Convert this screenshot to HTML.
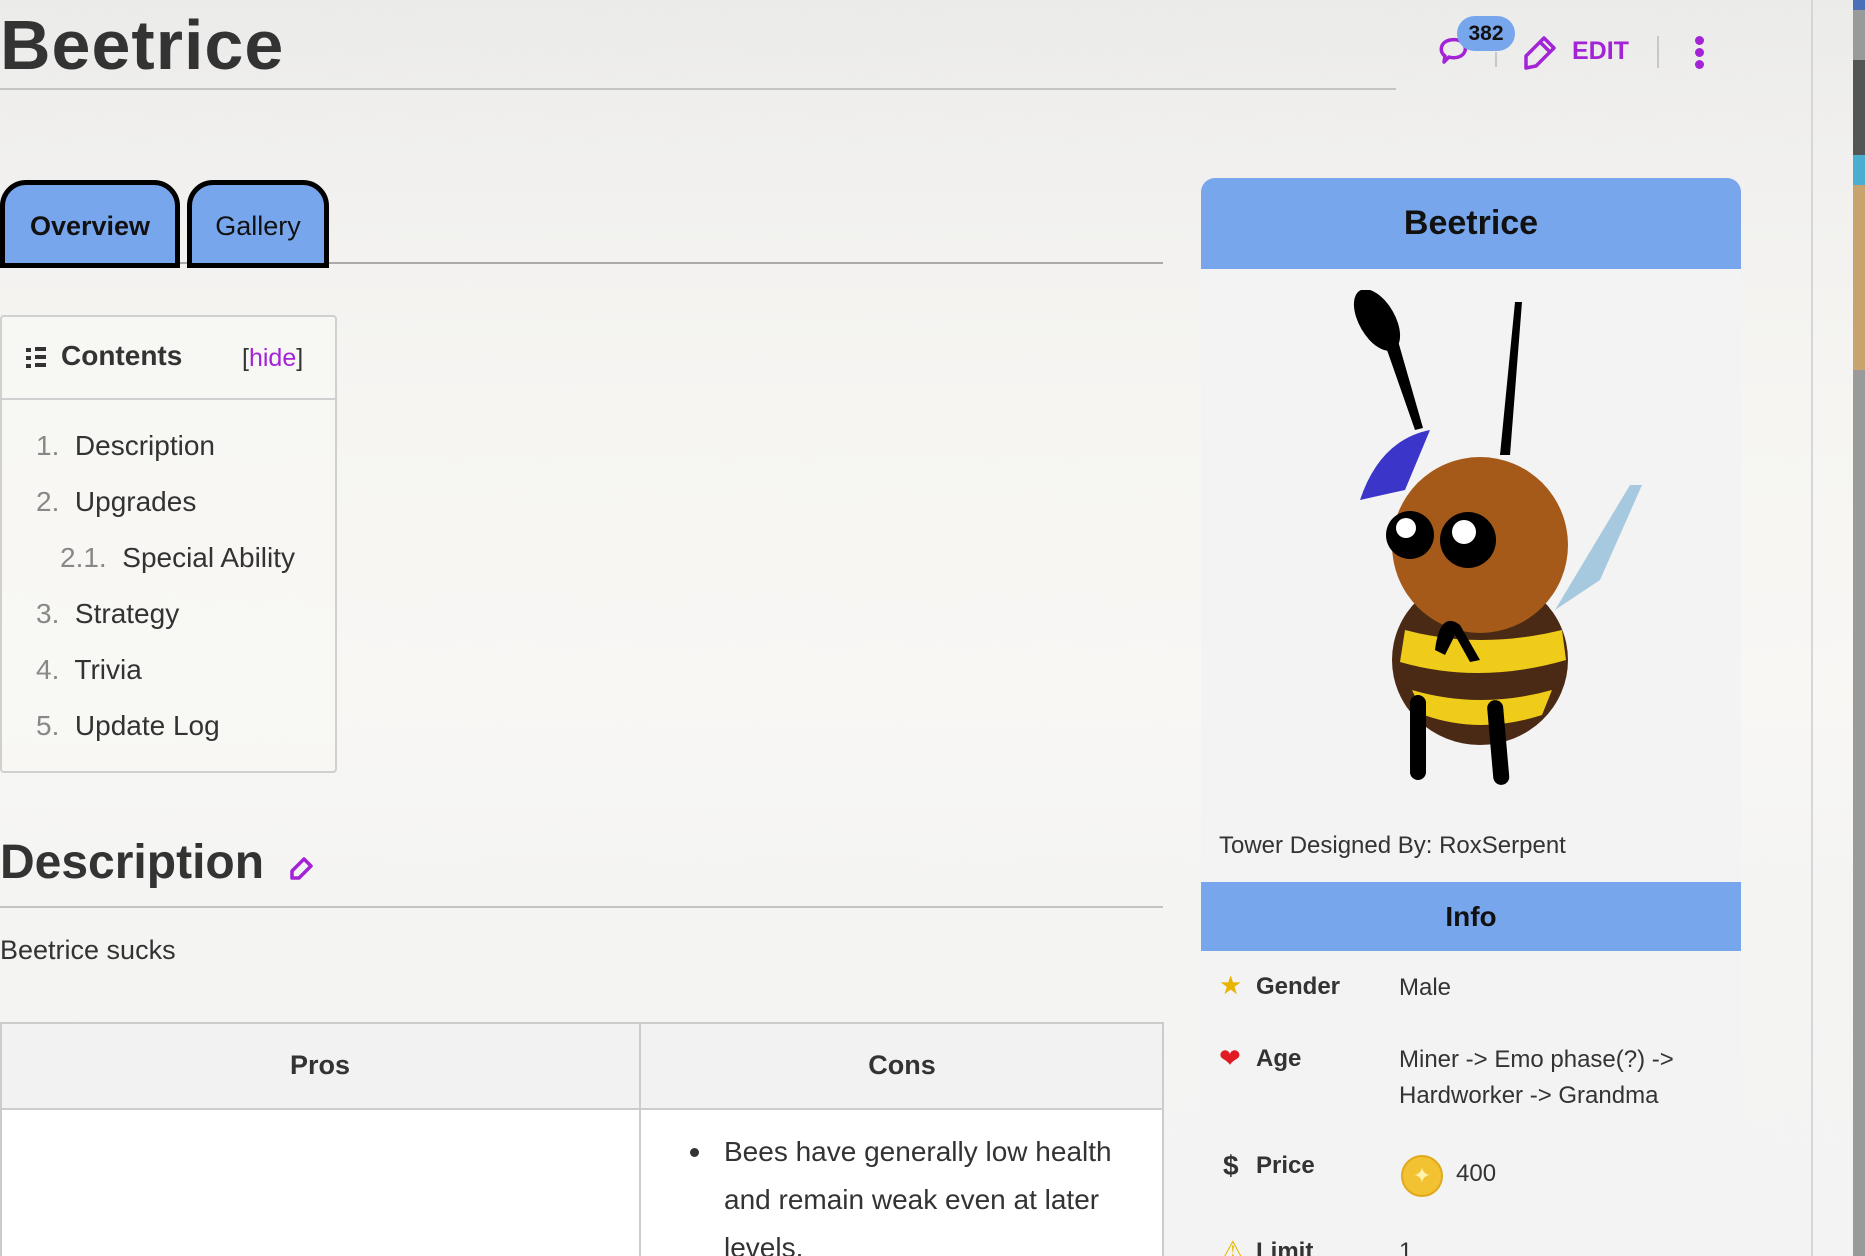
<!DOCTYPE html>
<html style="width:1865px;height:1256px;overflow:hidden"><head><meta charset="utf-8"><style>
*{margin:0;padding:0;box-sizing:border-box}
body{width:1865px;height:1256px;overflow:hidden;position:relative;font-family:"Liberation Sans",sans-serif;color:#2f2f2f;background:linear-gradient(180deg,#ebebea 0px,#f1f0ee 160px,#f6f5f2 400px,#f8f7f4 700px,#f4f4f3 900px,#f3f3f3 1256px)}
.a{position:absolute}
</style></head><body>
<div class="a" style="left:1811px;top:0;width:2px;height:1256px;background:#d6d6da"></div>
<div class="a" style="left:1853px;top:0;width:12px;height:10px;background:#4a70b8"></div>
<div class="a" style="left:1853px;top:10px;width:12px;height:50px;background:#9a9a9a"></div>
<div class="a" style="left:1853px;top:60px;width:12px;height:95px;background:#555"></div>
<div class="a" style="left:1853px;top:155px;width:12px;height:30px;background:#4aaed0"></div>
<div class="a" style="left:1853px;top:185px;width:12px;height:185px;background:#c9a36e"></div>
<div class="a" style="left:1853px;top:370px;width:12px;height:886px;background:#9a9a9a"></div>

<div class="a" style="left:0;top:2px;font-size:70px;font-weight:bold;color:#333;letter-spacing:1px;line-height:86px">Beetrice</div>
<div class="a" style="left:0;top:88px;width:1396px;height:2px;background:#c4c4c4"></div>

<svg class="a" style="left:1436px;top:34px" width="36" height="36" viewBox="0 0 36 36"><path d="M8 28 L9 22 C3 18 4 8 14 6 C24 4 31 10 29 17 C27 23 19 25 13 23 Z" fill="none" stroke="#a323d6" stroke-width="3.5" stroke-linejoin="round"/></svg>
<div class="a" style="left:1457px;top:16px;width:58px;height:35px;border-radius:18px;background:#78a6ec;font-weight:bold;font-size:21px;color:#111;text-align:center;line-height:35px">382</div>
<div class="a" style="left:1495px;top:52px;width:2px;height:15px;background:#c8c8c8"></div>
<svg class="a" style="left:1522px;top:32px" width="40" height="40" viewBox="0 0 40 40"><path d="M4 36 L4 24 L22 6 L32 16 L14 34 Z M18 10 L28 20" fill="none" stroke="#a323d6" stroke-width="3.5" stroke-linejoin="round"/></svg>
<div class="a" style="left:1572px;top:37px;font-size:25px;font-weight:bold;color:#a323d6">EDIT</div>
<div class="a" style="left:1657px;top:36px;width:2px;height:32px;background:#c8c8c8"></div>
<div class="a" style="left:1695px;top:36px;width:9px;height:9px;border-radius:50%;background:#a323d6"></div>
<div class="a" style="left:1695px;top:48px;width:9px;height:9px;border-radius:50%;background:#a323d6"></div>
<div class="a" style="left:1695px;top:60px;width:9px;height:9px;border-radius:50%;background:#a323d6"></div>

<div class="a" style="left:0;top:262px;width:1163px;height:2px;background:#aaa"></div>
<div class="a" style="left:0;top:180px;width:180px;height:88px;background:#78a6ec;border:5px solid #000;border-radius:26px 26px 0 0;font-weight:bold;font-size:27px;color:#111;text-align:center;line-height:82px">Overview</div>
<div class="a" style="left:187px;top:180px;width:142px;height:88px;background:#78a6ec;border:5px solid #000;border-radius:26px 26px 0 0;font-size:27px;color:#111;text-align:center;line-height:82px">Gallery</div>

<div class="a" style="left:0;top:315px;width:337px;height:458px;border:2px solid #d0d0d0;border-radius:4px;background:rgba(248,247,244,.8)"></div>
<div class="a" style="left:0;top:398px;width:337px;height:2px;background:#d0d0d0"></div>
<div class="a" style="left:26px;top:348px;width:5px;height:4px;background:#333;box-shadow:0 8px #333,0 16px #333"></div>
<div class="a" style="left:35px;top:347px;width:11px;height:4px;background:#333;box-shadow:0 8px #333,0 16px #333"></div>
<div class="a" style="left:61px;top:340px;font-size:28px;font-weight:bold;color:#333">Contents</div>
<div class="a" style="left:242px;top:344px;font-size:25px;color:#333">[<span style="color:#a323d6">hide</span>]</div>
<div class="a" style="left:36px;top:418px;font-size:28px;line-height:56px;color:#333">
<div><span style="color:#888">1.</span>&nbsp; Description</div>
<div><span style="color:#888">2.</span>&nbsp; Upgrades</div>
<div style="padding-left:24px"><span style="color:#888">2.1.</span>&nbsp; Special Ability</div>
<div><span style="color:#888">3.</span>&nbsp; Strategy</div>
<div><span style="color:#888">4.</span>&nbsp; Trivia</div>
<div><span style="color:#888">5.</span>&nbsp; Update Log</div>
</div>

<div class="a" style="left:0;top:835px;font-size:48px;font-weight:bold;color:#333">Description</div>
<svg class="a" style="left:289px;top:855px" width="26" height="26" viewBox="0 0 26 26"><path d="M3 23 L3 16 L15 4 L22 11 L10 23 Z" fill="none" stroke="#a323d6" stroke-width="3.5" stroke-linejoin="round"/></svg>
<div class="a" style="left:0;top:906px;width:1163px;height:2px;background:#c4c4c4"></div>
<div class="a" style="left:0;top:935px;font-size:27px;color:#333">Beetrice sucks</div>

<div class="a" style="left:0;top:1022px;width:1164px;height:260px;border:2px solid #ccc;background:#fff"></div>
<div class="a" style="left:0;top:1022px;width:1164px;height:88px;border:2px solid #ccc;background:#f2f2f2"></div>
<div class="a" style="left:639px;top:1022px;width:2px;height:260px;background:#ccc"></div>
<div class="a" style="left:0;top:1050px;width:640px;text-align:center;font-size:27px;font-weight:bold;color:#333">Pros</div>
<div class="a" style="left:640px;top:1050px;width:524px;text-align:center;font-size:27px;font-weight:bold;color:#333">Cons</div>
<div class="a" style="left:690px;top:1148px;width:9px;height:9px;border-radius:50%;background:#333"></div>
<div class="a" style="left:724px;top:1128px;width:400px;font-size:28px;line-height:48px;color:#333">Bees have generally low health and remain weak even at later levels.</div>

<div class="a" style="left:1201px;top:178px;width:540px;height:1100px;background:#f3f3f3;border-radius:14px 14px 0 0;overflow:hidden">
<div style="height:91px;background:#78a6ec;text-align:center;font-size:34px;font-weight:bold;color:#111;line-height:91px">Beetrice</div>
</div>
<svg class="a" style="left:1330px;top:290px" width="330" height="510" viewBox="0 0 330 510">
<path d="M300 195 L312 195 L270 290 L225 320 Z" fill="#9ec4de" opacity=".9"/>
<ellipse cx="47" cy="30" rx="18" ry="34" transform="rotate(-30 47 30)" fill="#000"/>
<path d="M50 40 L85 140 L93 138 L62 30 Z" fill="#000"/>
<path d="M185 12 L192 12 L180 165 L170 165 Z" fill="#000"/>
<ellipse cx="150" cy="370" rx="88" ry="85" fill="#4a2a14"/>
<path d="M75 340 Q150 360 232 340 L236 370 Q150 395 70 372 Z" fill="#f0cc1a"/>
<path d="M82 400 Q150 420 222 400 L212 425 Q150 445 94 425 Z" fill="#f0cc1a"/>
<rect x="80" y="405" width="16" height="85" rx="8" fill="#000"/>
<rect x="160" y="410" width="16" height="85" rx="8" transform="rotate(-5 168 450)" fill="#000"/>
<circle cx="150" cy="255" r="88" fill="#a65a1a"/>
<path d="M30 210 Q50 150 100 140 L75 200 Z" fill="#3b36c9"/>
<circle cx="80" cy="245" r="24" fill="#000"/><circle cx="76" cy="238" r="10" fill="#fff"/>
<circle cx="138" cy="250" r="28" fill="#000"/><circle cx="134" cy="242" r="12" fill="#fff"/>
<path d="M105 360 Q110 320 130 335 L150 370 L140 372 L125 345 L115 365 Z" fill="#000"/>
</svg>
<div class="a" style="left:1219px;top:832px;font-size:24px;color:#333">Tower Designed By: RoxSerpent</div>
<div class="a" style="left:1201px;top:882px;width:540px;height:69px;background:#78a6ec;text-align:center;font-size:28px;font-weight:bold;color:#111;line-height:69px">Info</div>
<div class="a" style="left:1219px;top:970px;font-size:26px;color:#e8b400">★</div>
<div class="a" style="left:1256px;top:973px;font-size:24px;font-weight:bold;color:#333">Gender</div>
<div class="a" style="left:1399px;top:974px;font-size:24px;color:#333">Male</div>
<div class="a" style="left:1219px;top:1043px;font-size:26px;color:#e01b24">❤</div>
<div class="a" style="left:1256px;top:1045px;font-size:24px;font-weight:bold;color:#333">Age</div>
<div class="a" style="left:1399px;top:1042px;font-size:24px;line-height:36px;color:#333">Miner -&gt; Emo phase(?) -&gt;<br>Hardworker -&gt; Grandma</div>
<div class="a" style="left:1223px;top:1150px;font-size:28px;font-weight:bold;color:#333">$</div>
<div class="a" style="left:1256px;top:1152px;font-size:24px;font-weight:bold;color:#333">Price</div>
<div class="a" style="left:1401px;top:1155px;width:42px;height:42px;border-radius:50%;background:#f2c233;border:2px solid #e0a81c;color:#fff3b0;text-align:center;line-height:38px;font-size:22px">✦</div>
<div class="a" style="left:1456px;top:1160px;font-size:24px;color:#333">400</div>
<div class="a" style="left:1222px;top:1236px;font-size:24px;color:#e6b800">⚠</div>
<div class="a" style="left:1256px;top:1238px;font-size:24px;font-weight:bold;color:#333">Limit</div>
<div class="a" style="left:1399px;top:1238px;font-size:24px;color:#333">1</div>
</body></html>
